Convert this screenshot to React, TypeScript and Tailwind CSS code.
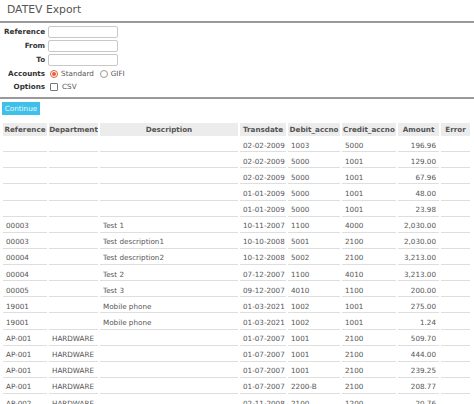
const rows = [
  ['', '', '', '02-02-2009', '1003', '5000', '196.96'],
  ['', '', '', '02-02-2009', '5000', '1001', '129.00'],
  ['', '', '', '02-02-2009', '5000', '1001', '67.96'],
  ['', '', '', '01-01-2009', '5000', '1001', '48.00'],
  ['', '', '', '01-01-2009', '5000', '1001', '23.98'],
  ['00003', '', 'Test 1', '10-11-2007', '1100', '4000', '2,030.00'],
  ['00003', '', 'Test description1', '10-10-2008', '5001', '2100', '2,030.00'],
  ['00004', '', 'Test description2', '10-12-2008', '5002', '2100', '3,213.00'],
  ['00004', '', 'Test 2', '07-12-2007', '1100', '4010', '3,213.00'],
  ['00005', '', 'Test 3', '09-12-2007', '4010', '1100', '200.00'],
  ['19001', '', 'Mobile phone', '01-03-2021', '1002', '1001', '275.00'],
  ['19001', '', 'Mobile phone', '01-03-2021', '1002', '1001', '1.24'],
  ['AP-001', 'HARDWARE', '', '01-07-2007', '1001', '2100', '509.70'],
  ['AP-001', 'HARDWARE', '', '01-07-2007', '1001', '2100', '444.00'],
  ['AP-001', 'HARDWARE', '', '01-07-2007', '1001', '2100', '239.25'],
  ['AP-001', 'HARDWARE', '', '01-07-2007', '2200-B', '2100', '208.77'],
  ['AP-002', 'HARDWARE', '', '02-11-2008', '2100', '1200', '20.76'],
]

const headers = [
  { name: 'Reference', w: 'w-[44px]' },
  { name: 'Department', w: 'w-[49px]' },
  { name: 'Description', w: 'w-[138px]' },
  { name: 'Transdate', w: 'w-[46px]' },
  { name: 'Debit_accno', w: 'w-[52px]' },
  { name: 'Credit_accno', w: 'w-[54px]' },
  { name: 'Amount', w: 'w-[41px]' },
  { name: 'Error', w: 'w-[29px]' },
]

function Field({ label }: { label: string }) {
  return (
    <tr>
      <th className="text-right pr-[3px] font-bold text-[#333] h-[14px]">{label}</th>
      <td>
        <div className="w-[70px] h-[12px] border border-[#c8c8c8] rounded-[2px] bg-white" />
      </td>
    </tr>
  )
}

export default function App() {
  return (
    <div
      className="w-[474px] h-[404px] overflow-hidden bg-white text-[#555] text-[7.2px]"
      style={{ fontFamily: '"DejaVu Sans", sans-serif' }}
    >
      <div className="h-[21px] pl-[7px] pt-[1px] text-[10.8px] leading-[18px] text-[#555]">
        DATEV Export
      </div>
      <div className="h-[2px] bg-[#9a9a9a]" />

      <table className="mt-[2px] border-collapse leading-[8px]">
        <tbody>
          <tr>
            <th className="text-right pl-[4px] pr-[3px] font-bold text-[#333] h-[14px]">Reference</th>
            <td>
              <div className="w-[70px] h-[12px] border border-[#c8c8c8] rounded-[2px] bg-white" />
            </td>
          </tr>
          <Field label="From" />
          <Field label="To" />
          <tr>
            <th className="text-right pr-[3px] font-bold text-[#333] h-[14px]">Accounts</th>
            <td>
              <div className="flex items-center gap-[3px] pl-[2px]">
                <span className="w-[8px] h-[8px] rounded-full border border-[#e0603c] flex items-center justify-center">
                  <span className="w-[4px] h-[4px] rounded-full bg-[#e0603c]" />
                </span>
                <span className="text-[#555]">Standard</span>
                <span className="ml-[3px] w-[8px] h-[8px] rounded-full border border-[#999]" />
                <span className="text-[#555]">GIFI</span>
              </div>
            </td>
          </tr>
          <tr>
            <th className="text-right pr-[3px] font-bold text-[#333] h-[12px]">Options</th>
            <td>
              <div className="flex items-center gap-[4px] pl-[2px]">
                <span className="w-[8px] h-[8px] rounded-[1px] border border-[#777]" />
                <span className="text-[#555]">CSV</span>
              </div>
            </td>
          </tr>
        </tbody>
      </table>

      <div className="mt-[4px] h-[2px] bg-[#9a9a9a]" />

      <div className="pl-[2px] pt-[3px]">
        <button className="w-[38px] h-[13px] bg-[#3ec0e8] text-[#eafaff] text-[7.2px] leading-[13px] text-center">
          Continue
        </button>
      </div>

      <table className="mt-[6px] ml-[1px] table-fixed border-separate border-spacing-[2px] w-[471px]">
        <thead>
          <tr>
            {headers.map((h) => (
              <th
                key={h.name}
                className={`${h.w} bg-[#ececec] h-[13px] px-0 font-bold text-[#555] text-center leading-[13px] whitespace-nowrap overflow-hidden`}
              >
                {h.name}
              </th>
            ))}
          </tr>
        </thead>
        <tbody>
          {rows.map((r, i) => (
            <tr key={i}>
              {r.map((c, j) => (
                <td
                  key={j}
                  className={`border-b border-[#dedede] pt-[3.5px] pb-[1.63px] leading-[8px] whitespace-nowrap ${
                    j === 6 ? 'text-right pr-[3px]' : 'text-left pl-[3px]'
                  }`}
                >
                  {c}
                </td>
              ))}
              <td className="border-b border-[#dedede]" />
            </tr>
          ))}
        </tbody>
      </table>
    </div>
  )
}
